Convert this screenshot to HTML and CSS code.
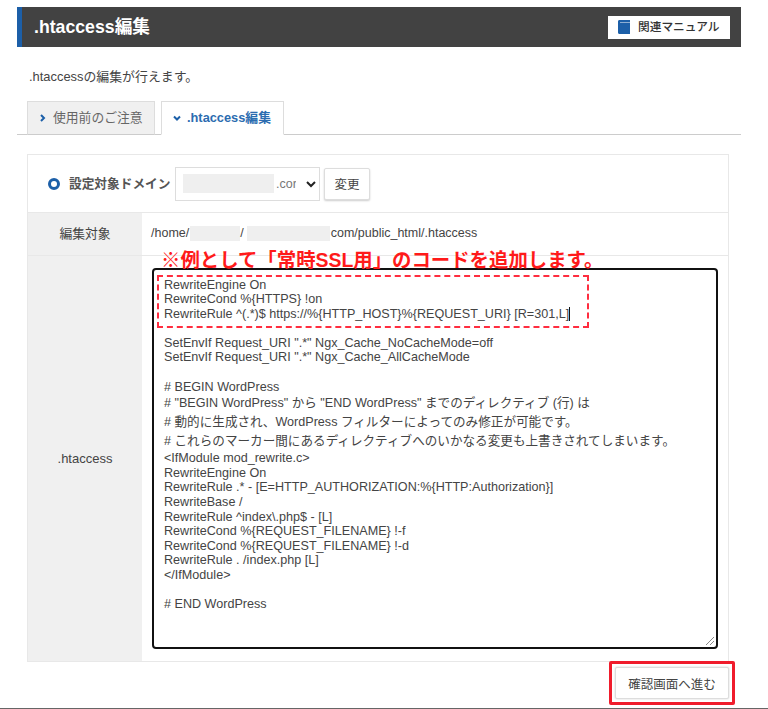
FILE: index.html
```html
<!DOCTYPE html>
<html lang="ja">
<head>
<meta charset="utf-8">
<title>.htaccess編集</title>
<link rel="stylesheet" href="styles.css">
</head>
<body>
<div class="page">
  <header class="head">
    <h1 class="head-title">.htaccess編集</h1>
    <a class="manual">
      <svg class="book" viewBox="0 0 12 14" width="12" height="14"><path d="M0 1.5C0 .6.6 0 1.5 0H12v2H2v.6H12V14H1.5C.6 14 0 13.4 0 12.5z" fill="#1c5fa8"/></svg>
      <span class="manual-text">関連マニュアル</span>
    </a>
  </header>
  <p class="lead">.htaccessの編集が行えます。</p>
  <nav class="tabs">
    <div class="tab off"><svg class="chev" viewBox="0 0 8 8" width="8" height="8"><path d="M2 1l3 3-3 3" fill="none" stroke="#1c5fa8" stroke-width="2"/></svg><span class="tab-text">使用前のご注意</span></div>
    <div class="tab on"><svg class="chev" viewBox="0 0 8 8" width="8" height="8"><path d="M1 2.5l3 3 3-3" fill="none" stroke="#1c5fa8" stroke-width="2"/></svg><span class="tab-text">.htaccess編集</span></div>
  </nav>
  <section class="panel">
    <div class="domain">
      <span class="radio"></span>
      <b class="domain-label">設定対象ドメイン</b>
      <div class="select"><span class="mask mask-select"></span><span class="select-text">.cor</span><svg class="select-arrow" viewBox="0 0 10 8" width="10" height="8"><path d="M1 2l4 4 4-4" fill="none" stroke="#222" stroke-width="2"/></svg></div>
      <button class="change">変更</button>
    </div>
    <div class="row row-path">
      <div class="label label-path">編集対象</div>
      <div class="value path">/home/<span class="mask mask-a"></span>/<span class="mask mask-b"></span>com/public_html/.htaccess</div>
    </div>
    <div class="row row-code">
      <div class="label label-code">.htaccess</div>
      <div class="value code-cell">
        <div class="code">
          <div class="l">RewriteEngine On</div>
          <div class="l">RewriteCond %{HTTPS} !on</div>
          <div class="l">RewriteRule ^(.*)$ https://%{HTTP_HOST}%{REQUEST_URI} [R=301,L]<span class="caret"></span></div>
          <div class="l">&nbsp;</div>
          <div class="l">SetEnvIf Request_URI ".*" Ngx_Cache_NoCacheMode=off</div>
          <div class="l">SetEnvIf Request_URI ".*" Ngx_Cache_AllCacheMode</div>
          <div class="l">&nbsp;</div>
          <div class="l"># BEGIN WordPress</div>
          <div class="l jp"># "BEGIN WordPress" から "END WordPress" までのディレクティブ (行) は</div>
          <div class="l jp"># 動的に生成され、WordPress フィルターによってのみ修正が可能です。</div>
          <div class="l jp"># これらのマーカー間にあるディレクティブへのいかなる変更も上書きされてしまいます。</div>
          <div class="l">&lt;IfModule mod_rewrite.c&gt;</div>
          <div class="l">RewriteEngine On</div>
          <div class="l">RewriteRule .* - [E=HTTP_AUTHORIZATION:%{HTTP:Authorization}]</div>
          <div class="l">RewriteBase /</div>
          <div class="l">RewriteRule ^index\.php$ - [L]</div>
          <div class="l">RewriteCond %{REQUEST_FILENAME} !-f</div>
          <div class="l">RewriteCond %{REQUEST_FILENAME} !-d</div>
          <div class="l">RewriteRule . /index.php [L]</div>
          <div class="l">&lt;/IfModule&gt;</div>
          <div class="l">&nbsp;</div>
          <div class="l"># END WordPress</div>
          <svg class="grip" viewBox="0 0 10 10" width="10" height="10"><path d="M1 9L9 1M5 9L9 5" stroke="#888" stroke-width="1"/></svg>
        </div>
        <div class="dashed"></div>
        <div class="note">※例として「常時SSL用」のコードを追加します。</div>
      </div>
    </div>
  </section>
  <div class="actions">
    <div class="highlight"><button class="next">確認画面へ進む</button></div>
  </div>
</div>
</body>
</html>
```
FILE: styles.css
```css
* { box-sizing: border-box; }
html, body { margin: 0; padding: 0; background: #fff; }
body {
  width: 768px;
  height: 709px;
  overflow: hidden;
  font-family: "Liberation Sans", "Noto Sans CJK JP", sans-serif;
  color: #444;
  font-size: 12px;
  border-bottom: 1px solid #666;
}
.page { padding: 7px 27px 0 17px; }
.head {
  height: 40px;
  background: #424242;
  border-left: 5px solid #1c5fa8;
  display: flex;
  align-items: center;
  justify-content: space-between;
  padding: 0 11px 0 12px;
}
.head-title { margin: 0; font-size: 17.7px; font-weight: 700; color: #fff; line-height: 40px; }
.manual {
  width: 122px;
  height: 23px;
  background: #fff;
  color: #333;
  font-size: 11.7px;
  font-weight: 500;
  display: flex;
  align-items: center;
  padding-left: 10px;
  gap: 8px;
}
.manual-text { margin-top: -3px; }
.lead { margin: 0; padding: 21px 0 0 12px; height: 54px; line-height: 17px; font-size: 12.9px; color: #444; }
.tabs {
  display: flex;
  gap: 6px;
  padding-left: 10px;
  height: 34px;
  border-bottom: 1px solid #ccc;
}
.tab {
  height: 34px;
  border: 1px solid #ddd;
  display: flex;
  align-items: center;
  font-size: 12.8px;
}
.tab-text { margin-top: -3px; }
.tab.off { width: 128px; background: #f0f0f0; padding-left: 11px; border-bottom: 1px solid #ccc; color: #666; }
.tab.on { width: 123px; background: #fff; border-bottom-color: #fff; padding-left: 11px; color: #2b6cb0; font-weight: 700; }
.chev { margin-right: 6px; flex: none; }
.panel {
  margin: 19px 0 0 10px;
  width: 702px;
  height: 508px;
  border: 1px solid #e8e8e8;
  display: flex;
  flex-direction: column;
}
.domain {
  height: 58px;
  display: flex;
  align-items: center;
  padding-left: 20px;
  border-bottom: 1px solid #e8e8e8;
}
.radio { width: 12px; height: 12px; border: 3px solid #1c5fa8; border-radius: 50%; margin-right: 9px; flex: none; }
.domain-label { font-size: 12.7px; color: #555; white-space: nowrap; width: 106px; flex: none; padding-bottom: 2px; }
.select {
  width: 145px;
  height: 34px;
  border: 1px solid #ddd;
  display: flex;
  align-items: center;
  padding-left: 7px;
  flex: none;
}
.mask { background: #efefef; display: inline-block; }
.mask-select { width: 91px; height: 19px; flex: none; }
.select-text { font-size: 12.5px; color: #777; margin-left: 2px; width: 20px; overflow: hidden; }
.select-arrow { margin-left: 10px; flex: none; }
.change {
  margin-left: 4px;
  width: 46px;
  height: 32px;
  background: #fff;
  border: 1px solid #ddd;
  border-radius: 2px;
  box-shadow: 0 1px 2px rgba(0,0,0,.2);
  font: 12.5px "Liberation Sans", "Noto Sans CJK JP", sans-serif;
  color: #444;
  padding: 0;
}
.row { display: flex; border-bottom: 1px solid #e8e8e8; }
.row-path { height: 43px; }
.row-code { height: 405px; border-bottom: 0; }
.label {
  width: 114px;
  flex: none;
  background: #f0f0f0;
  display: flex;
  align-items: center;
  justify-content: center;
  font-size: 12.8px;
  color: #444;
}
.label-path { padding-bottom: 3px; }
.label-code { font-size: 13px; }
.value { flex: 1; position: relative; }
.path { display: flex; align-items: center; padding: 0 0 2px 9px; font-size: 12.5px; color: #444; white-space: pre; }
.mask-a { width: 50px; height: 15px; margin: 0 0 0 1px; }
.mask-b { width: 83px; height: 15px; margin: 0 1px 0 3px; }
.code-cell { padding: 12px 0 0 10px; }
.code {
  width: 566px;
  height: 381px;
  border: 2px solid #111;
  border-radius: 4px;
  padding: 7.5px 0 0 10px;
  position: relative;
  font-size: 12.6px;
  color: #444;
  background: #fff;
}
.l { height: 14.6px; line-height: 14.6px; white-space: pre; }
.l.jp { height: 19px; line-height: 19px; }
.caret { display: inline-block; width: 1px; height: 14px; background: #111; vertical-align: -3px; }
.grip { position: absolute; right: 1px; bottom: 1px; }
.dashed {
  position: absolute;
  left: 15px;
  top: 19px;
  width: 432px;
  height: 53px;
  border: 2px dashed #ff2d3f;
}
.note {
  position: absolute;
  left: 19px;
  top: -7px;
  font-size: 19.4px;
  line-height: 22px;
  font-weight: 700;
  color: #ff1a1a;
  white-space: nowrap;
}
.actions { display: flex; justify-content: flex-end; }
.highlight {
  margin: -1px 6px 0 0;
  width: 126px;
  height: 44px;
  border: 3px solid #f01c2c;
  border-radius: 2px;
  padding: 3px;
}
.next {
  width: 100%;
  height: 100%;
  background: #fff;
  border: 1px solid #ddd;
  border-radius: 2px;
  box-shadow: 0 0 2px rgba(0,0,0,.2);
  font: 12.5px "Liberation Sans", "Noto Sans CJK JP", sans-serif;
  color: #444;
  padding: 0;
}
```
